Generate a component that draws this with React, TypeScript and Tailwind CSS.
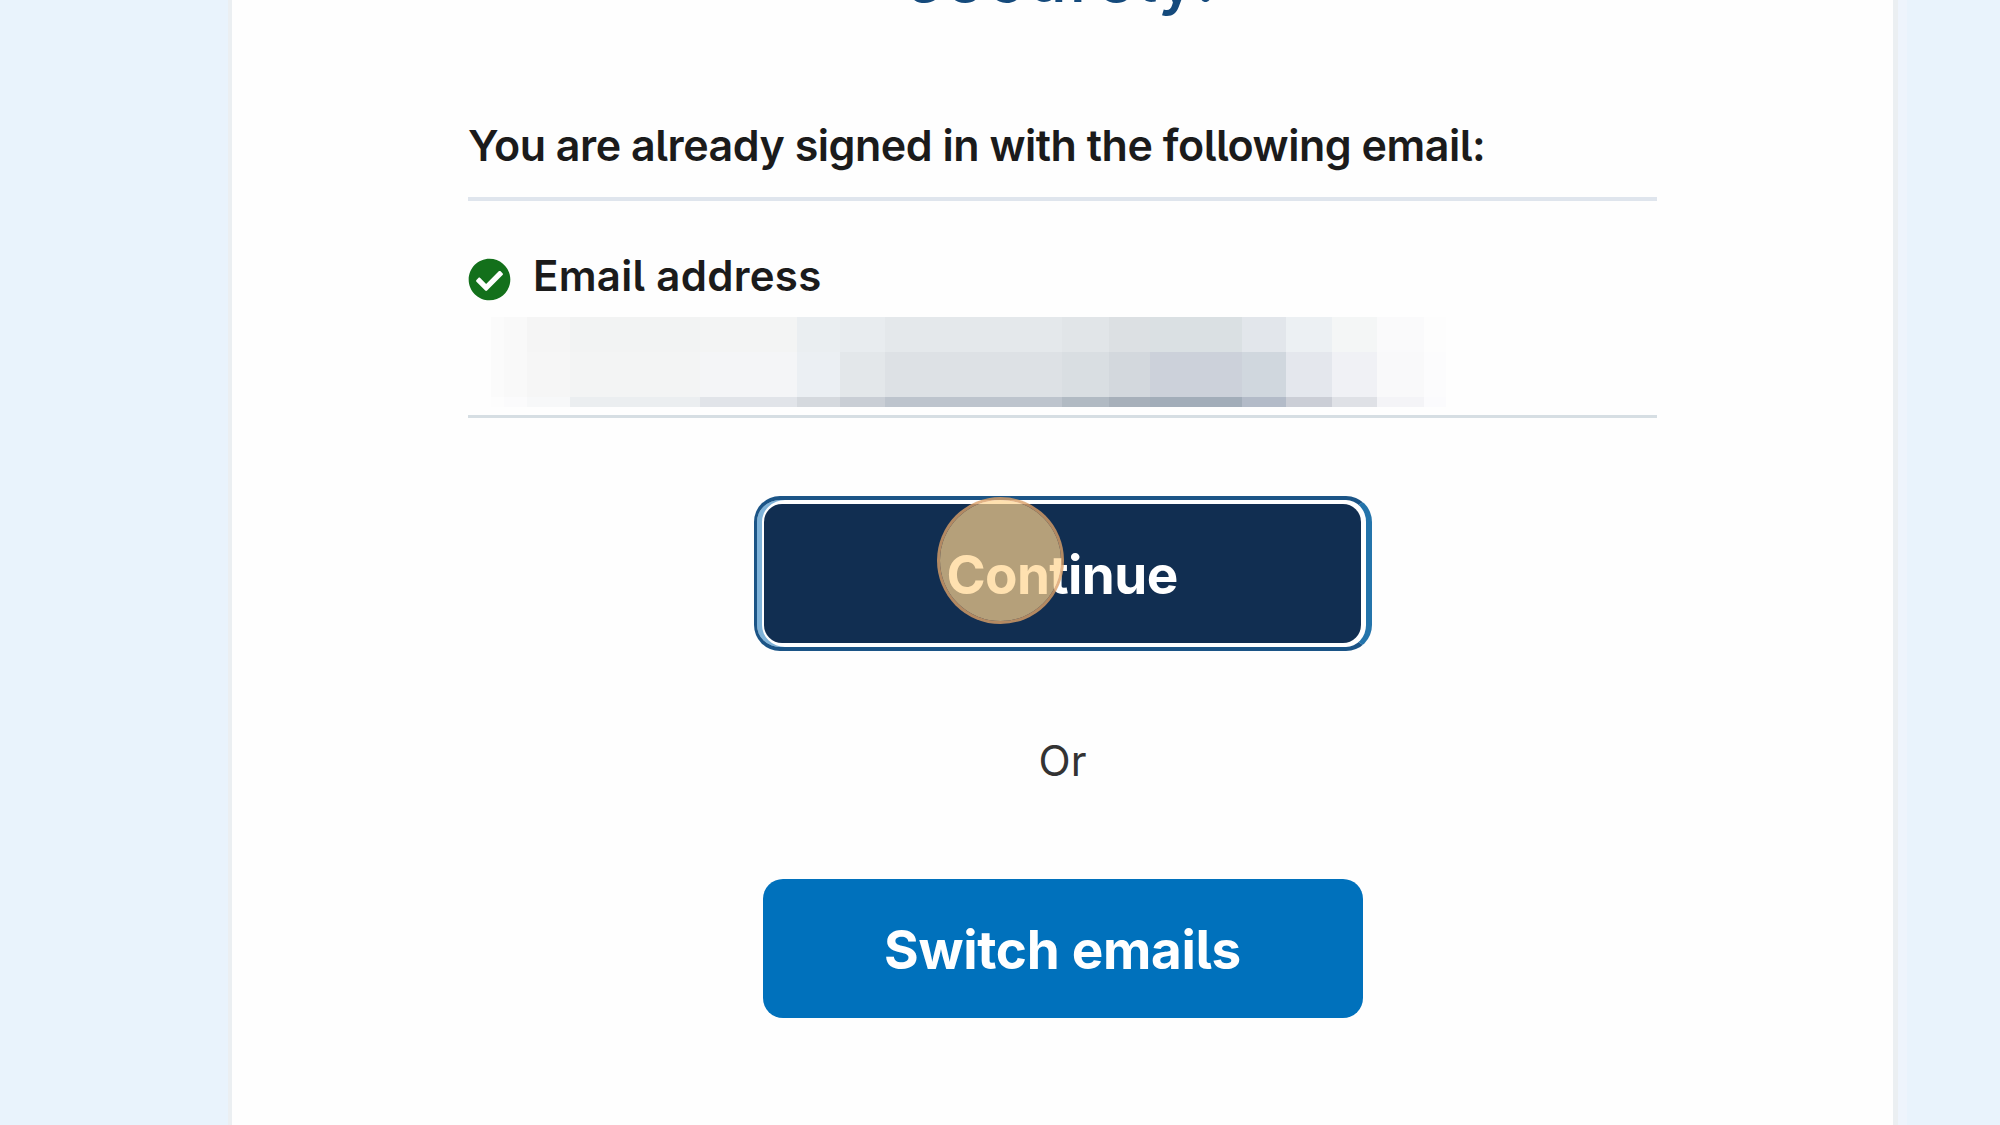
import type { ReactNode } from "react";
import { FaCheckCircle } from "react-icons/fa";
import clsx from "clsx";

// Pixelated bars that hide the user's email, one per column
const maskColumns = [
  { width: "w-[13px]", top: "bg-[#fbfbfb]", middle: "bg-[#fbfbfb]", bottom: "bg-[#fdfdfd]" },
  { width: "w-[23px]", top: "bg-[#f9f9f9]", middle: "bg-[#f9f9f9]", bottom: "bg-[#fbfbfc]" },
  { width: "w-[43px]", top: "bg-[#f5f5f5]", middle: "bg-[#f6f6f6]", bottom: "bg-[#f7f8f9]" },
  { width: "w-[130px]", top: "bg-[#f2f3f3]", middle: "bg-[#f3f4f4]", bottom: "bg-[#ebeef0]" },
  { width: "w-[97px]", top: "bg-[#f3f4f4]", middle: "bg-[#f4f5f7]", bottom: "bg-[#e1e4e9]" },
  { width: "w-[43px]", top: "bg-[#eaeef1]", middle: "bg-[#ebeff3]", bottom: "bg-[#d5d9de]" },
  { width: "w-[45px]", top: "bg-[#e8ecef]", middle: "bg-[#e3e7ea]", bottom: "bg-[#c9ced5]" },
  { width: "w-[177px]", top: "bg-[#e4e8eb]", middle: "bg-[#dde1e5]", bottom: "bg-[#bdc4cd]" },
  { width: "w-[47px]", top: "bg-[#e1e5e8]", middle: "bg-[#d9dee2]", bottom: "bg-[#b1bac3]" },
  { width: "w-[41px]", top: "bg-[#dce0e3]", middle: "bg-[#d3d8dd]", bottom: "bg-[#a7b0ba]" },
  { width: "w-[92px]", top: "bg-[#dae0e3]", middle: "bg-[#ccd1da]", bottom: "bg-[#a2adb9]" },
  { width: "w-[44px]", top: "bg-[#e2e6eb]", middle: "bg-[#d0d7de]", bottom: "bg-[#b3bbc8]" },
  { width: "w-[46px]", top: "bg-[#ecf0f3]", middle: "bg-[#e4e7ed]", bottom: "bg-[#cbced6]" },
  { width: "w-[45px]", top: "bg-[#f4f6f6]", middle: "bg-[#f0f1f5]", bottom: "bg-[#dfe1e6]" },
  { width: "w-[47px]", top: "bg-[#fafafb]", middle: "bg-[#f9f9fa]", bottom: "bg-[#f4f4f7]" },
  { width: "w-[22px]", top: "bg-[#fdfdfd]", middle: "bg-[#fcfcfd]", bottom: "bg-[#fbfbfd]" },
];

const MaskedEmail = () => (
  <div className="ml-[23px] flex h-[90px]" aria-label="Hidden email">
    {maskColumns.map((column, index) => (
      <div key={index} className={clsx("flex flex-col", column.width)}>
        <div className={clsx("h-[35px]", column.top)} />
        <div className={clsx("h-[45px]", column.middle)} />
        <div className={clsx("h-[10px]", column.bottom)} />
      </div>
    ))}
  </div>
);

const PrimaryButton = ({
  className,
  children,
}: {
  className: string;
  children: ReactNode;
}) => (
  <button
    type="button"
    className={clsx(
      "flex items-center justify-center pt-[3px] text-[53px] leading-none font-bold text-white",
      className
    )}
  >
    {children}
  </button>
);

const App = () => {
  return (
    <div className="flex h-[1125px] w-[2000px] overflow-hidden bg-[#e9f3fc] font-['Inter',sans-serif] [font-feature-settings:'cv05']">
      <div className="w-[228px]" />
      <main className="flex w-[1670px] flex-col items-center border-r-[5px] border-l-4 border-[#ebeff2] bg-[#fefefe]">
        <h1 className="-mt-[58px] h-[79px] text-[66px] leading-[72px] font-medium tracking-[2.6px] whitespace-nowrap text-[#154a7c]">
          securely.
        </h1>

        <section className="w-[1189px] text-[#1b1b1b]">
          <div className="flex h-[180px] items-center border-b-4 border-[#dfe5ed] pt-[72px]">
            <h2 className="text-[43px] leading-[60px] font-semibold tracking-[-0.48px] whitespace-nowrap">
              You are already signed in with the following email:
            </h2>
          </div>
          <div className="h-[217px] border-b-[3px] border-[#d6dee3]">
            <div className="flex h-[116px] items-center gap-[22px] pt-[40px]">
              <FaCheckCircle className="size-[43px] text-[#13701b]" />
              <span className="-mt-[6px] text-[42px] leading-[60px] font-semibold tracking-[0.3px]">
                Email address
              </span>
            </div>
            <MaskedEmail />
          </div>
        </section>

        <div className="relative mt-[78px] h-[155px] w-[618px] rounded-[26px] border-4 border-r-[6px] border-l-[3px] border-[#1b5486] border-r-[#2474ab] bg-white pt-[4px] pr-[5px] pb-[4px] pl-[3px] shadow-[inset_5px_0_0_#7fb3d9]">
          <PrimaryButton className="ml-[4px] h-[139px] w-[597px] rounded-[18px] bg-[#112e51] tracking-[-0.6px]">
            Continue
          </PrimaryButton>
          <div className="absolute -top-[3px] left-[180px] size-[127px] rounded-full border-[3px] border-[#dca066]/80 bg-[#ffd48c]/69 bg-clip-padding" />
        </div>

        <p className="mt-[80px] text-[42px] leading-[60px] text-[#333333]">Or</p>

        <PrimaryButton className="mt-[88px] h-[139px] w-[600px] rounded-[20px] bg-[#0071bc] tracking-[-0.3px]">
          Switch emails
        </PrimaryButton>
      </main>
      <div className="w-[9px] bg-[#eef4fc]" />
    </div>
  );
};

export default App;
